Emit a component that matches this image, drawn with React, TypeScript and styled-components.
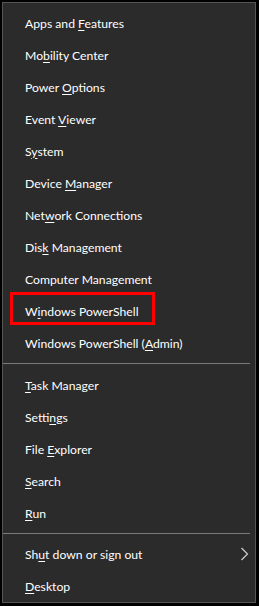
import React from 'react'
import styled, { createGlobalStyle } from 'styled-components'

const GlobalStyle = createGlobalStyle`
  html, body {
    margin: 0;
    padding: 0;
    background: #000000;
  }
  #root {
    padding: 2px 3px 3px 2px;
    width: 259px;
    height: 606px;
    box-sizing: border-box;
  }
`

const Menu = styled.div`
  position: relative;
  background: #2b2b2b;
  border: 1px solid #555555;
  padding-top: 4px;
  height: 100%;
  box-sizing: border-box;
  display: flex;
  flex-direction: column;
  font-family: Lato, 'Noto Sans', sans-serif;
  font-size: 12.2px;
  color: #ffffff;
`

const Item = styled.div`
  height: 32px;
  flex: none;
  display: flex;
  align-items: center;
  justify-content: space-between;
  padding: 0 6px 0 22px;
  white-space: nowrap;
`

const Key = styled.span`
  text-decoration: underline;
  text-underline-offset: 2px;
`

const Separator = styled.div<{ $bottom: number }>`
  flex: none;
  height: 1px;
  margin: 4px 5px ${p => p.$bottom}px 0;
  background: #7a7a7a;
`

const Highlight = styled.div`
  position: absolute;
  left: 7px;
  top: 289px;
  width: 145px;
  height: 33px;
  box-sizing: border-box;
  border: 3px solid #ff0000;
  pointer-events: none;
`

const Chevron = () => (
  <svg width='9' height='14' viewBox='0 0 9 14'>
    <path d='M1.5 1 L7.5 7 L1.5 13' fill='none' stroke='#d0d0d0' strokeWidth='1.2' />
  </svg>
)

type Entry = { pre: string; key: string; post: string; sub?: boolean }

const label = (s: string, i: number, sub?: boolean): Entry => ({
  pre: s.slice(0, i),
  key: i < 0 ? '' : s.charAt(i),
  post: i < 0 ? '' : s.slice(i + 1),
  sub,
})

const groups: Entry[][] = [
  [
    label('Apps and Features', 9),
    label('Mobility Center', 2),
    label('Power Options', 6),
    label('Event Viewer', 6),
    label('System', 1),
    label('Device Manager', 7),
    label('Network Connections', 3),
    label('Disk Management', 3),
    { pre: 'Computer Management', key: '', post: '' },
    label('Windows PowerShell', 1),
    label('Windows PowerShell (Admin)', 20),
  ],
  [
    label('Task Manager', 0),
    label('Settings', 5),
    label('File Explorer', 5),
    label('Search', 0),
    label('Run', 0),
  ],
  [
    label('Shut down or sign out', 2, true),
    label('Desktop', 0),
  ],
]

const App: React.FC = () => (
  <>
    <GlobalStyle />
    <Menu>
      {groups.map((group, g) => (
        <React.Fragment key={g}>
          {g > 0 && <Separator $bottom={g === 1 ? 5 : 4} />}
          {group.map(e => (
            <Item key={e.pre + e.key + e.post}>
              <span>
                {e.pre}
                {e.key && <Key>{e.key}</Key>}
                {e.post}
              </span>
              {e.sub && <Chevron />}
            </Item>
          ))}
        </React.Fragment>
      ))}
      <Highlight />
    </Menu>
  </>
)

export default App
